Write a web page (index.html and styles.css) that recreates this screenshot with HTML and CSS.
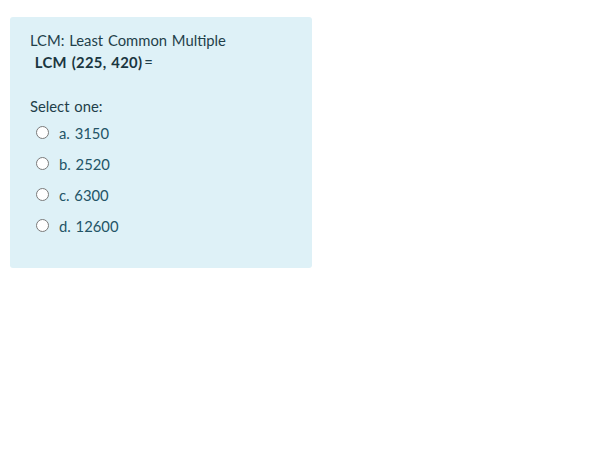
FILE: index.html
```html
<!DOCTYPE html>
<html>
<head>
<meta charset="utf-8">
<link rel="stylesheet" href="styles.css">
</head>
<body>
<div class="page">
  <div class="formulation">
    <div class="qtext">
      <div>LCM: Least Common Multiple</div>
      <div class="eq">&nbsp;<strong>LCM (225, 420)</strong><span class="eqsign">=</span></div>
    </div>
    <div class="prompt">Select one:</div>
    <div class="answer">
      <label class="opt"><span class="radio"></span><span>a. 3150</span></label>
      <label class="opt"><span class="radio"></span><span>b. 2520</span></label>
      <label class="opt"><span class="radio"></span><span>c. 6300</span></label>
      <label class="opt"><span class="radio"></span><span>d. 12600</span></label>
    </div>
  </div>
</div>
</body>
</html>
```
FILE: styles.css
```css
html, body {
  margin: 0;
  padding: 0;
  background: #ffffff;
}
.page {
  padding: 17px 0 0 10px;
}
.formulation {
  box-sizing: border-box;
  width: 302px;
  height: 251px;
  background: #def1f7;
  border-radius: 3px;
  padding: 12px 20px 26px 20px;
  font-family: "Lato", "Noto Sans", sans-serif;
  font-size: 14.8px;
  word-spacing: 1px;
  color: #1f3f4a;
}
.qtext {
  line-height: 22px;
}
.eq strong {
  font-weight: 700;
  color: #1a3640;
  letter-spacing: 0.3px;
  word-spacing: 1px;
}
.eqsign {
  margin-left: 2px;
}
.prompt {
  margin-top: 22px;
  line-height: 22px;
}
.answer {
  display: flex;
  flex-direction: column;
}
.opt {
  height: 31px;
  display: flex;
  align-items: center;
  padding-left: 6px;
  color: #235466;
}
.radio {
  box-sizing: border-box;
  width: 13px;
  height: 13px;
  border: 1px solid #7a7a7a;
  border-radius: 50%;
  background: #ffffff;
  margin-right: 10px;
  flex: none;
}
```
